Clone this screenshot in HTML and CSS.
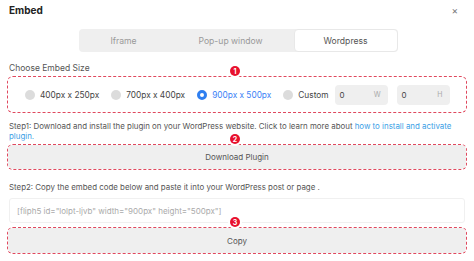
FILE: index.html
```html
<!DOCTYPE html>
<html>
<head>
<meta charset="utf-8">
<link rel="stylesheet" href="styles.css">
</head>
<body>
<div class="dialog">
  <div class="header">
    <span class="title">Embed</span>
    <span class="close">×</span>
  </div>
  <div class="tabs-wrap">
    <div class="tabs">
      <div class="tab">Iframe</div>
      <div class="tab">Pop-up window</div>
      <div class="tab active">Wordpress</div>
    </div>
  </div>
  <div class="label">Choose Embed Size</div>
  <div class="mark size-box">
    <span class="badge">1</span>
    <label class="radio"><span class="dot"></span>400px x 250px</label>
    <label class="radio"><span class="dot"></span>700px x 400px</label>
    <label class="radio checked"><span class="dot"></span>900px x 500px</label>
    <label class="radio custom"><span class="dot"></span>Custom</label>
    <div class="num"><span>0</span><span class="unit">W</span></div>
    <div class="num"><span>0</span><span class="unit">H</span></div>
  </div>
  <div class="step">Step1: Download and install the plugin on your WordPress website. Click to learn more about <span class="link">how to install and activate plugin.</span></div>
  <div class="mark btn-box">
    <span class="badge">2</span>
    <div class="btn">Download Plugin</div>
  </div>
  <div class="step step2">Step2: Copy the embed code below and paste it into your WordPress post or page .</div>
  <div class="code">[fliph5 id="lolpt-ljvb" width="900px" height="500px"]</div>
  <div class="mark btn-box last">
    <span class="badge">3</span>
    <div class="btn">Copy</div>
  </div>
</div>
</body>
</html>
```
FILE: styles.css
```css
* { box-sizing: border-box; }
html, body { margin: 0; padding: 0; background: #fff; }
body {
  font-family: Inter, "Noto Sans", sans-serif;
  color: #333;
  width: 474px;
  height: 261px;
  overflow: hidden;
}
.dialog { padding: 2px 7px 0 7px; }
.header {
  display: flex;
  justify-content: space-between;
  align-items: center;
  height: 16px;
  padding: 0 9px 0 2px;
}
.title { font-size: 10px; font-weight: 700; color: #222; }
.close { font-size: 10px; color: #777; }
.tabs-wrap { display: flex; justify-content: center; margin-top: 11px; padding-left: 3px; }
.tabs {
  display: flex;
  background: #efefef;
  border-radius: 4px;
  height: 23px;
}
.tab {
  display: flex;
  align-items: center;
  justify-content: center;
  padding: 0 31px;
  font-size: 8.6px;
  color: #999;
  white-space: nowrap;
}
.tab.active {
  background: #fff;
  color: #555;
  border: 1px solid #e8e8e8;
  border-radius: 4px;
  padding: 0 29px;
}
.label { font-size: 8.5px; color: #555; margin: 10px 0 0 2px; height: 12px; line-height: 12px; }
.mark {
  position: relative;
  border: 1px dashed #e0485e;
  border-radius: 6px;
}
.badge {
  position: absolute;
  top: -11px;
  left: 222px;
  width: 10px;
  height: 10px;
  border-radius: 50%;
  background: #e8112d;
  color: #fff;
  font-size: 7px;
  font-weight: 700;
  display: flex;
  align-items: center;
  justify-content: center;
  box-shadow: 0 0 0 2px #fff;
}
.size-box {
  margin-top: 2px;
  height: 37px;
  display: flex;
  align-items: center;
  padding-left: 17px;
}
.radio {
  display: flex;
  align-items: center;
  font-size: 8.3px;
  color: #444;
  margin-right: 12px;
  white-space: nowrap;
  flex-shrink: 0;
}
.radio.custom { margin-right: 6px; }
.dot {
  width: 10px;
  height: 10px;
  border-radius: 50%;
  background: #dcdcdc;
  margin-right: 5px;
}
.radio.checked { color: #3b82f6; }
.radio.checked .dot {
  background: #fff;
  border: 3px solid #2f7ff0;
}
.num {
  width: 53px;
  height: 20px;
  background: #efefef;
  border-radius: 4px;
  margin-right: 9px;
  display: flex;
  flex-shrink: 0;
  align-items: center;
  justify-content: space-between;
  padding: 0 7px 0 5px;
  font-size: 8px;
  color: #444;
}
.unit { color: #aaa; font-size: 7px; }
.step {
  font-size: 7.9px;
  color: #555;
  line-height: 10px;
  margin: 8px 0 0 2px;
  height: 20px;
}
.link { color: #3ba0e6; }
.btn-box { height: 26px; margin-top: 3px; }
.btn {
  height: 100%;
  background: #efefef;
  border-radius: 5px;
  display: flex;
  align-items: center;
  justify-content: center;
  font-size: 8px;
  color: #555;
}
.step2 { margin-top: 11px; height: 12px; line-height: 12px; }
.code {
  margin: 5px 2px 0 2px;
  height: 25px;
  border: 1px solid #f0f0f0;
  border-radius: 3px;
  display: flex;
  align-items: center;
  padding-left: 7px;
  font-size: 8px;
  color: #aaa;
}
.btn-box.last { margin-top: 4px; height: 27px; }
```
